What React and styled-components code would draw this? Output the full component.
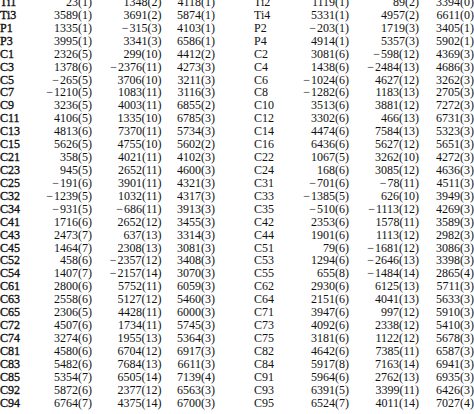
import React from 'react';
import styled, { createGlobalStyle } from 'styled-components';

const GlobalStyle = createGlobalStyle`
  html, body {
    margin: 0;
    padding: 0;
    background: #ffffff;
  }
  body {
    width: 474px;
    height: 414px;
    overflow: hidden;
  }
`;

const Page = styled.div`
  display: flex;
  gap: 39px;
  margin-top: -4px;
  font-family: "Liberation Serif", "Times New Roman", serif;
  font-size: 12px;
  line-height: 12.93px;
  color: #111111;
`;

const Half = styled.div`
  display: grid;
  grid-template-columns: ${(p) => p.$cols};
  grid-auto-rows: 12.93px;
`;

const Label = styled.div`
  text-align: left;
  white-space: nowrap;
  -webkit-text-stroke: ${(p) => (p.$heavy ? '0.35px #111111' : '0')};
`;

const Num = styled.div`
  text-align: right;
  white-space: nowrap;
`;

const M = '\u2212\u200A';

const left = [
  ['Ti1', '23(1)', '1348(2)', '4118(1)'],
  ['Ti3', '3589(1)', '3691(2)', '5874(1)'],
  ['P1', '1335(1)', M + '315(3)', '4103(1)'],
  ['P3', '3995(1)', '3341(3)', '6586(1)'],
  ['C1', '2326(5)', '299(10)', '4412(2)'],
  ['C3', '1378(6)', M + '2376(11)', '4273(3)'],
  ['C5', M + '265(5)', '3706(10)', '3211(3)'],
  ['C7', M + '1210(5)', '1083(11)', '3116(3)'],
  ['C9', '3236(5)', '4003(11)', '6855(2)'],
  ['C11', '4106(5)', '1335(10)', '6785(3)'],
  ['C13', '4813(6)', '7370(11)', '5734(3)'],
  ['C15', '5626(5)', '4755(10)', '5602(2)'],
  ['C21', '358(5)', '4021(11)', '4102(3)'],
  ['C23', '945(5)', '2652(11)', '4600(3)'],
  ['C25', M + '191(6)', '3901(11)', '4321(3)'],
  ['C32', M + '1239(5)', '1032(11)', '4317(3)'],
  ['C34', M + '931(5)', M + '686(11)', '3913(3)'],
  ['C41', '1716(6)', '2652(12)', '3455(3)'],
  ['C43', '2473(7)', '637(13)', '3314(3)'],
  ['C45', '1464(7)', '2308(13)', '3081(3)'],
  ['C52', '458(6)', M + '2357(12)', '3408(3)'],
  ['C54', '1407(7)', M + '2157(14)', '3070(3)'],
  ['C61', '2800(6)', '5752(11)', '6059(3)'],
  ['C63', '2558(6)', '5127(12)', '5460(3)'],
  ['C65', '2306(5)', '4428(11)', '6000(3)'],
  ['C72', '4507(6)', '1734(11)', '5745(3)'],
  ['C74', '3274(6)', '1955(13)', '5364(3)'],
  ['C81', '4580(6)', '6704(12)', '6917(3)'],
  ['C83', '5482(6)', '7684(13)', '6611(3)'],
  ['C85', '5354(7)', '6505(14)', '7139(4)'],
  ['C92', '5872(6)', '2377(12)', '6563(3)'],
  ['C94', '6764(7)', '4375(14)', '6700(3)'],
];

const right = [
  ['Ti2', '1119(1)', '89(2)', '3394(0)'],
  ['Ti4', '5331(1)', '4957(2)', '6611(0)'],
  ['P2', M + '203(1)', '1719(3)', '3405(1)'],
  ['P4', '4914(1)', '5357(3)', '5902(1)'],
  ['C2', '3081(6)', M + '598(12)', '4369(3)'],
  ['C4', '1438(6)', M + '2484(13)', '4686(3)'],
  ['C6', M + '1024(6)', '4627(12)', '3262(3)'],
  ['C8', M + '1282(6)', '1183(13)', '2705(3)'],
  ['C10', '3513(6)', '3881(12)', '7272(3)'],
  ['C12', '3302(6)', '466(13)', '6731(3)'],
  ['C14', '4474(6)', '7584(13)', '5323(3)'],
  ['C16', '6436(6)', '5627(12)', '5651(3)'],
  ['C22', '1067(5)', '3262(10)', '4272(3)'],
  ['C24', '168(6)', '3085(12)', '4636(3)'],
  ['C31', M + '701(6)', M + '78(11)', '4511(3)'],
  ['C33', M + '1385(5)', '626(10)', '3949(3)'],
  ['C35', M + '510(6)', M + '1113(12)', '4269(3)'],
  ['C42', '2353(6)', '1578(11)', '3589(3)'],
  ['C44', '1901(6)', '1113(12)', '2982(3)'],
  ['C51', '79(6)', M + '1681(12)', '3086(3)'],
  ['C53', '1294(6)', M + '2646(13)', '3398(3)'],
  ['C55', '655(8)', M + '1484(14)', '2865(4)'],
  ['C62', '2930(6)', '6125(13)', '5711(3)'],
  ['C64', '2151(6)', '4041(13)', '5633(3)'],
  ['C71', '3947(6)', '997(12)', '5910(3)'],
  ['C73', '4092(6)', '2338(12)', '5410(3)'],
  ['C75', '3181(6)', '1122(12)', '5678(3)'],
  ['C82', '4642(6)', '7385(11)', '6587(3)'],
  ['C84', '5917(8)', '7163(14)', '6941(3)'],
  ['C91', '5964(6)', '2762(13)', '6935(3)'],
  ['C93', '6391(5)', '3399(11)', '6426(3)'],
  ['C95', '6524(7)', '4011(14)', '7027(4)'],
];

const Coords = ({ rows, cols, heavy }) => (
  <Half $cols={cols}>
    {rows.map(([atom, x, y, z]) => (
      <React.Fragment key={atom}>
        <Label $heavy={heavy}>{atom}</Label>
        <Num>{x}</Num>
        <Num>{y}</Num>
        <Num>{z}</Num>
      </React.Fragment>
    ))}
  </Half>
);

export default function App() {
  return (
    <>
      <GlobalStyle />
      <Page>
        <Coords rows={left} cols="30px 62px 69.5px 53.5px" heavy />
        <Coords rows={right} cols="30px 65px 70px 55px" />
      </Page>
    </>
  );
}
